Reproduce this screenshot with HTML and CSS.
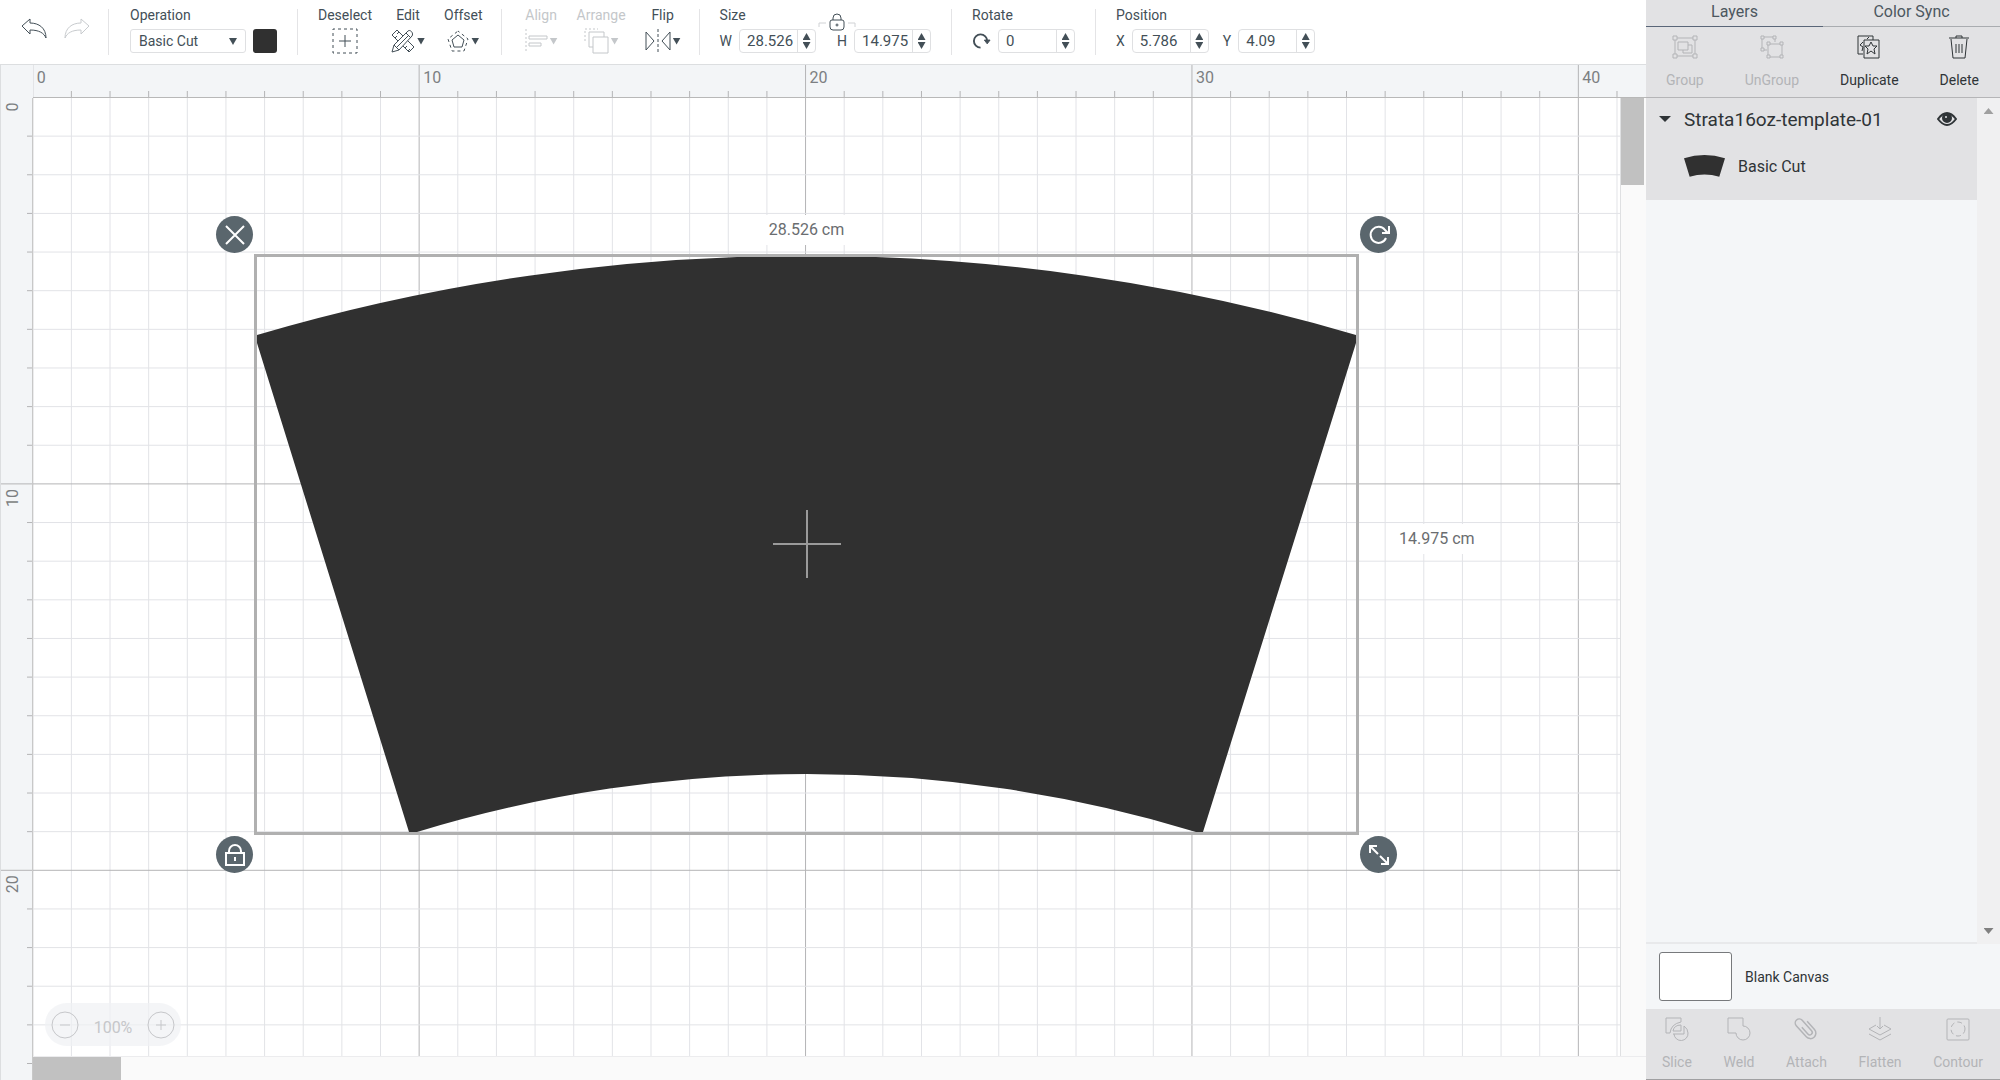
FILE: index.html
```
<!DOCTYPE html>
<html lang="en">
  <head>
    <meta charset="UTF-8" />
    <meta name="viewport" content="width=device-width, initial-scale=1.0" />
    <title>Canvas</title>
    <link rel="stylesheet" href="styles.css">
  </head>
  <body>
    <main class="editor">
      <div class="toolbar">
        <div class="group history">
          <button class="icon-btn" aria-label="Undo">
            <svg width="26" height="22" viewBox="0 0 26 22"><path d="M1 8 9 1v4c9 0 16 5 16 15-2-5-7-8-16-8v4L1 8z" /></svg>
          </button>
          <button class="icon-btn" aria-label="Redo" disabled>
            <svg width="26" height="22" viewBox="0 0 26 22"><path d="M25 8 17 1v4C8 5 1 10 1 20c2-5 7-8 16-8v4l8-8z" /></svg>
          </button>
        </div>

        <div class="group operation">
          <label class="title" for="operation">Operation</label>
          <div class="row">
            <div class="select">
              <select id="operation">
                <option>Basic Cut</option>
              </select>
              <span class="caret"></span>
            </div>
            <button class="swatch" aria-label="Material colour"></button>
          </div>
        </div>

        <div class="group tools">
          <button class="tool">
            <span class="title">Deselect</span>
            <span class="row">
              <svg width="26" height="26" viewBox="0 0 26 26"><rect x="1" y="1" width="24" height="24" stroke-dasharray="3 3" stroke-dashoffset="1" /><path d="M7 13h12M13 7v12" /></svg>
            </span>
          </button>
          <button class="tool">
            <span class="title">Edit</span>
            <span class="row">
              <svg width="24" height="24" viewBox="0 0 24 24"><path d="m1 6 5-5 17 17-5 5zM4 9l2-2M7 12l2-2M14 19l2-2M17 22l2-2M8 3 6 5" /><path class="paper" d="M1 23 3 16 17 2c2-2 6 2 4 5L8 21zM3 16l5 5M15 4l5 5M6 18 18 6" /></svg>
              <span class="caret"></span>
            </span>
          </button>
          <button class="tool">
            <span class="title">Offset</span>
            <span class="row">
              <svg width="22" height="22" viewBox="0 0 22 22"><path d="m11 5 6 5-2 7H7l-2-7z" /><path d="m11 1 10 8-4 12H5L1 9z" stroke-dasharray="3 3" stroke-dashoffset="1" /></svg>
              <span class="caret"></span>
            </span>
          </button>
        </div>

        <div class="group tools arrange">
          <button class="tool" disabled>
            <span class="title">Align</span>
            <span class="row">
              <svg width="23" height="26" viewBox="0 0 23 26"><path d="M1 1v24" stroke-dasharray="2 2" /><path d="M4 8h18v3H4zM4 15h12v3H4z" /></svg>
              <span class="caret"></span>
            </span>
          </button>
          <button class="tool" disabled>
            <span class="title">Arrange</span>
            <span class="row">
              <svg width="25" height="26" viewBox="0 0 25 26"><path d="M1 13V1h13" stroke-dasharray="2 2" /><path d="M9 19H5V4h15v5M9 9h15v16H9z" /></svg>
              <span class="caret"></span>
            </span>
          </button>
          <button class="tool">
            <span class="title">Flip</span>
            <span class="row">
              <svg width="26" height="26" viewBox="0 0 26 26"><path d="M1 4v18l8-9zM25 4v18l-8-9z" /><path d="M13 1v24" stroke-dasharray="3 2" /></svg>
              <span class="caret"></span>
            </span>
          </button>
        </div>

        <div class="group size">
          <div class="size-head">
            <span class="title">Size</span>
            <button class="icon-btn lock" aria-label="Lock proportions">
              <svg width="38" height="18" viewBox="0 0 38 18"><path class="faint" d="M1 14v-4h7M30 10h7v4" /><path d="M14 7h10q2 0 2 2v5q0 3-3 3h-8q-3 0-3-3V9q0-2 2-2zM15 7V5a4 4 0 0 1 8 0v2" /><circle cx="19" cy="12" r="1" /></svg>
            </button>
          </div>
          <div class="row fields">
            <label for="width">W</label>
            <div class="spinner">
              <input id="width" type="text" value="28.526">
              <span class="steps"><button aria-label="Increase width"></button><button aria-label="Decrease width"></button></span>
            </div>
            <label class="next" for="height">H</label>
            <div class="spinner">
              <input id="height" type="text" value="14.975">
              <span class="steps"><button aria-label="Increase height"></button><button aria-label="Decrease height"></button></span>
            </div>
          </div>
        </div>

        <div class="group">
          <span class="title">Rotate</span>
          <div class="row fields">
            <label for="rotate" aria-label="Angle">
              <svg width="19" height="20" viewBox="1 0 20 20"><path stroke-width="2" d="M10 17a7 7 0 1 1 7-7" /><path class="solid" d="M14 9h6l-3 4z" /></svg>
            </label>
            <div class="spinner">
              <input id="rotate" type="text" value="0">
              <span class="steps"><button aria-label="Increase angle"></button><button aria-label="Decrease angle"></button></span>
            </div>
          </div>
        </div>

        <div class="group">
          <span class="title">Position</span>
          <div class="row fields">
            <label for="pos-x">X</label>
            <div class="spinner">
              <input id="pos-x" type="text" value="5.786">
              <span class="steps"><button aria-label="Increase X"></button><button aria-label="Decrease X"></button></span>
            </div>
            <label class="next" for="pos-y">Y</label>
            <div class="spinner">
              <input id="pos-y" type="text" value="4.09">
              <span class="steps"><button aria-label="Increase Y"></button><button aria-label="Decrease Y"></button></span>
            </div>
          </div>
        </div>
      </div>

      <div class="workspace">
        <div class="corner"></div>
        <svg class="ruler-x"></svg>
        <svg class="ruler-y"></svg>

        <div class="canvas">
          <svg class="grid"></svg>

          <div class="selection">
            <svg class="shape" viewBox="0 0 1099 575">
              <path d="M0 78A1945 1945 0 0 1 1099 78V86L946 575H939A1338 1338 0 0 0 160 575H152L0 86z" />
              <path class="cross" d="M516 287h68M550 253v68" />
            </svg>
            <span class="measure measure-w">28.526 cm</span>
            <span class="measure measure-h">14.975 cm</span>
            <button class="handle top left" aria-label="Delete shape">
              <svg width="22" height="22" viewBox="0 0 22 22"><path d="m2 2 18 18M20 2 2 20" /></svg>
            </button>
            <button class="handle top right" aria-label="Rotate shape">
              <svg width="22" height="22" viewBox="0 0 22 22"><path d="M18 14a8 8 0 1 1-1-8l3 3M21 2v7h-7" /></svg>
            </button>
            <button class="handle bottom left" aria-label="Lock shape">
              <svg width="22" height="22" viewBox="0 0 22 22"><path d="M2 9h18v12H2zM5 9V7a6 6 0 0 1 12 0v2M11 13v4" /></svg>
            </button>
            <button class="handle bottom right" aria-label="Resize shape">
              <svg width="22" height="22" viewBox="0 0 22 22"><path d="m2 2 8 8M2 9V2h7M12 12l8 8M20 13v7h-7" /></svg>
            </button>
          </div>

          <div class="zoom">
            <button aria-label="Zoom out"><svg width="28" height="28" viewBox="0 0 28 28"><circle cx="14" cy="14" r="13" /><path d="M9 14h10" /></svg></button>
            <span>100%</span>
            <button aria-label="Zoom in"><svg width="28" height="28" viewBox="0 0 28 28"><circle cx="14" cy="14" r="13" /><path d="M9 14h10M14 9v10" /></svg></button>
          </div>
        </div>

        <div class="scroll-y"><div class="thumb"></div></div>
        <div class="scroll-x"><div class="thumb"></div></div>
      </div>
    </main>

    <aside class="panel">
      <div class="tabs">
        <button class="active">Layers</button>
        <button>Color Sync</button>
      </div>

      <div class="actions">
        <button disabled>
          <svg width="26" height="24" viewBox="0 0 26 24"><path d="M5 3h16M5 21h16M3 5v14M23 5v14M1 1h4v4H1zM21 1h4v4h-4zM1 19h4v4H1zM21 19h4v4h-4zM6 7h10v8H6zM16 10h4v8h-9v-3" /></svg>
          Group
        </button>
        <button disabled>
          <svg width="24" height="24" viewBox="0 0 24 24"><path d="M4 2h9M2 4v9M15 4v3M4 15h3M1 1h3v3H1zM13 1h3v3h-3zM1 13h3v3H1zM10 9h10M10 22h10M8 10v10M22 10v10M7 7h3v3H7zM20 7h3v3h-3zM7 20h3v3H7zM20 20h3v3h-3z" /></svg>
          UnGroup
        </button>
        <button>
          <svg width="24" height="24" viewBox="0 0 24 24"><path d="M6 19H1V1h15v4M7 5h15v18H7zM3 10l3-3M3 10l3 2-1 4M10 4l2-2" /><path d="m14 7 2 4h4l-3 3 1 5-4-3-4 3 1-5-3-3h4z" /></svg>
          Duplicate
        </button>
        <button>
          <svg width="22" height="24" viewBox="0 0 22 24"><path d="M1 3h20M8 3V1h6v2M3 4l2 19h12l2-19M8 9v9M11 9v9M14 9v9" /></svg>
          Delete
        </button>
      </div>

      <div class="layers">
        <div class="layer-list">
          <div class="layer">
            <div class="layer-head">
              <button class="fold" aria-label="Collapse layer"></button>
              <span class="name">Strata16oz-template-01</span>
              <button class="icon-btn" aria-label="Hide layer">
                <svg class="eye" width="20" height="14" viewBox="0 0 20 14"><path d="M1 7q9-12 18 0-9 12-18 0z" /><circle class="solid" cx="10" cy="6" r="4" /><circle class="glint" cx="9" cy="5" r="1" /></svg>
              </button>
            </div>
            <div class="layer-item">
              <svg width="41" height="22" viewBox="0 0 1099 575"><path d="M0 78A1890 1890 0 0 1 1099 78L946 575A1338 1338 0 0 0 152 575z" /></svg>
              <span>Basic Cut</span>
            </div>
          </div>
        </div>
        <div class="layer-scroll">
          <button class="up" aria-label="Scroll up"></button>
          <button class="down" aria-label="Scroll down"></button>
        </div>
      </div>

      <div class="blank">
        <button class="blank-swatch" aria-label="Canvas colour"></button>
        <span>Blank Canvas</span>
      </div>

      <div class="actions combine">
        <button disabled>
          <svg width="24" height="24" viewBox="0 0 24 24"><path d="M1 16V1h15v4Q6 7 5 16zM8 14q1-6 8-6v6zM8 17h11V9q4 3 4 7a7 7 0 0 1-14 1" /></svg>
          Slice
        </button>
        <button disabled>
          <svg width="24" height="24" viewBox="0 0 24 24"><path d="M1 1h15v8a7 7 0 1 1-7 7H1z" /></svg>
          Weld
        </button>
        <button disabled>
          <svg width="24" height="24" viewBox="0 0 24 24"><path transform="rotate(-42 12 12)" stroke-width="1.5" d="M10 8v9a2 2 0 0 0 5 0V3a4 4 0 0 0-8 0v15a5 5 0 0 0 11 0V7" /></svg>
          Attach
        </button>
        <button disabled>
          <svg width="24" height="24" viewBox="0 0 24 24"><path d="M12 0v12M9 9l3 3 3-3M8 8l-7 4 11 6 11-6-7-4M1 17l11 6 11-6" /></svg>
          Flatten
        </button>
        <button disabled>
          <svg width="24" height="24" viewBox="0 0 24 24"><rect x="1" y="2" width="22" height="21" rx="1" /><circle cx="12" cy="12" r="7" stroke-dasharray="5 3" /></svg>
          Contour
        </button>
      </div>
    </aside>

    <script>
      const CM = 38.64; // pixels per centimetre at 100%

      function line(x1, y1, x2, y2, major) {
        return `<line x1="${x1}" y1="${y1}" x2="${x2}" y2="${y2}" class="${major ? 'major' : 'minor'}" />`;
      }

      function draw() {
        const grid = document.querySelector('.grid');
        const rulerX = document.querySelector('.ruler-x');
        const rulerY = document.querySelector('.ruler-y');
        const { width, height } = grid.getBoundingClientRect();
        const size = 33;
        let lines = '';
        let top = '';
        let side = '';

        for (let i = 0; i * CM < width; i++) {
          const x = i * CM - 0.25;
          const major = i % 10 === 0;
          lines += line(x, 0, x, height, major);
          top += line(x, major ? 0 : 26, x, size, true);
          if (major) top += `<text x="${x + 4}" y="18">${i}</text>`;
        }
        for (let i = 0; i * CM < height + 24; i++) {
          const y = i * CM - 0.5;
          const major = i % 10 === 0;
          lines += line(0, y, width, y, major);
          side += line(major ? 0 : 26, y, size, y, true);
          if (major) {
            const ty = y + (i ? 23 : 14);
            side += `<text transform="translate(17 ${ty}) rotate(-90)">${i}</text>`;
          }
        }

        grid.innerHTML = lines;
        rulerX.innerHTML = top;
        rulerY.innerHTML = side;
      }

      draw();
      window.addEventListener('resize', draw);
    </script>
  </body>
</html>
```
FILE: styles.css
```
* {
  margin: 0;
  padding: 0;
  box-sizing: border-box;
}
body {
  display: grid;
  grid-template-columns: 1fr 354px;
  height: 100vh;
  overflow: hidden;
  background: #fff;
  color: #434f57;
  font-family: Roboto, sans-serif;
  font-size: 14px;
}
button,
input,
select {
  font: inherit;
  color: inherit;
  background: none;
  border: none;
}
svg {
  display: block;
  fill: none;
  stroke: currentColor;
}
.solid {
  fill: currentColor;
}

/* toolbar */
.editor {
  display: flex;
  flex-direction: column;
  min-width: 0;
}
.toolbar {
  display: flex;
  height: 65px;
  padding: 9px 0;
  border-bottom: 1px solid #dcdee0;
}
.group {
  display: flex;
  flex-direction: column;
  height: 46px;
  padding: 0 20px;
  border-right: 1px solid #e4e4e6;
}
.group:last-child {
  border-right: none;
}
.title {
  display: block;
  height: 20px;
  line-height: 13px;
  white-space: nowrap;
}
.row {
  display: flex;
  align-items: center;
  height: 24px;
}
.history {
  flex-direction: row;
  align-items: center;
  gap: 17px;
  padding: 0 18px 6px 21px;
}
.history button:disabled {
  color: #c8cbce;
}
.operation {
  padding-left: 21px;
}
.operation .row {
  gap: 7px;
}
.select {
  position: relative;
}
.select select {
  appearance: none;
  width: 116px;
  height: 24px;
  padding-left: 8px;
  border: 1px solid #dfe0e2;
  border-radius: 3px;
}
.select .caret {
  position: absolute;
  top: 9px;
  right: 9px;
  pointer-events: none;
}
.caret {
  width: 8px;
  height: 7px;
  background: currentColor;
  clip-path: polygon(0 0, 100% 0, 50% 100%);
}
.swatch {
  width: 24px;
  height: 24px;
  border-radius: 3px;
  background: #303030;
}
.tools {
  flex-direction: row;
  gap: 19px;
  padding-right: 18px;
}
.arrange {
  padding-left: 23px;
}
.tool {
  display: flex;
  flex-direction: column;
  align-items: center;
}
.tool .row {
  gap: 2px;
}
.tool:disabled {
  color: #c4c7ca;
}
.paper {
  fill: #fff;
}
.size-head {
  display: flex;
  justify-content: space-between;
  height: 20px;
  padding-right: 75px;
}
.lock {
  padding-top: 4px;
}
.faint {
  stroke: #d0d2d5;
}
.fields {
  gap: 7px;
}
.fields .next {
  margin-left: 7px;
}
.size .next {
  margin-left: 14px;
}
.spinner {
  display: flex;
  width: 77px;
  height: 24px;
  border: 1px solid #dfe0e2;
  border-radius: 4px;
}
.spinner input {
  flex: 1;
  min-width: 0;
  padding-left: 7px;
  font-size: 15px;
  outline: none;
}
.steps {
  display: flex;
  flex-direction: column;
  justify-content: center;
  align-items: center;
  gap: 2px;
  width: 18px;
  border-left: 1px solid #dfe0e2;
}
.steps button {
  width: 8px;
  height: 7px;
  background: currentColor;
  clip-path: polygon(50% 0, 100% 100%, 0 100%);
}
.steps button:last-child {
  clip-path: polygon(0 0, 100% 0, 50% 100%);
}

/* rulers and canvas */
.workspace {
  flex: 1;
  display: grid;
  grid-template-columns: 33px 1fr 25px;
  grid-template-rows: 33px 1fr 24px;
  grid-template-areas:
    "corner top top"
    "side canvas scroll"
    "side bottom bottom";
  min-height: 0;
}
.corner,
.ruler-x,
.ruler-y {
  width: 100%;
  height: 100%;
  background: #f3f5f7;
}
.corner {
  grid-area: corner;
  border-left: 1px solid #dcdee0;
}
.ruler-x {
  grid-area: top;
  border-bottom: 1px solid #b8b8b8;
}
.ruler-y {
  grid-area: side;
  border-left: 1px solid #dcdee0;
  border-right: 1px solid #c8c8c8;
}
.workspace text {
  fill: #7c7f82;
  stroke: none;
  font-size: 16px;
}
.major {
  stroke: #b4b4b6;
}
.minor {
  stroke: #e2e3e7;
}
.canvas {
  grid-area: canvas;
  position: relative;
  overflow: hidden;
  border-right: 1px solid #dfe0e2;
}
.grid {
  width: 100%;
  height: 100%;
}
.selection {
  position: absolute;
  left: 221px;
  top: 156px;
  width: 1105px;
  height: 581px;
  border: 3px solid #b0b0b0;
}
.shape {
  width: 100%;
  height: 100%;
  fill: #303030;
  stroke: none;
}
.cross {
  stroke: #9a9a9a;
  stroke-width: 2;
}
.measure {
  position: absolute;
  padding: 5px;
  background: #fff;
  color: #6a6d70;
  font-size: 16px;
  line-height: 20px;
  white-space: nowrap;
}
.measure-w {
  left: 50%;
  bottom: calc(100% + 12px);
  transform: translateX(-50%);
}
.measure-h {
  left: calc(100% + 38px);
  top: calc(50% - 21px);
}
.handle {
  position: absolute;
  display: grid;
  place-items: center;
  width: 37px;
  height: 37px;
  border-radius: 50%;
  background: #5a666d;
  color: #fff;
}
.handle svg {
  stroke-width: 2;
}
.handle.left {
  left: -41px;
}
.handle.right {
  right: -41px;
}
.handle.top {
  top: -41px;
}
.handle.bottom {
  bottom: -41px;
}
.zoom {
  position: absolute;
  left: 12px;
  bottom: 10px;
  display: flex;
  align-items: center;
  justify-content: space-between;
  width: 136px;
  height: 43px;
  padding: 0 6px;
  border-radius: 22px;
  background: rgba(240, 241, 243, 0.7);
  color: #c6c7ca;
  font-size: 16px;
}
.zoom span {
  padding-top: 6px;
}
.scroll-y {
  grid-area: scroll;
  background: #fafafa;
}
.scroll-y .thumb {
  width: 23px;
  height: 87px;
  background: #c1c1c1;
}
.scroll-x {
  grid-area: bottom;
  background: #fafafa;
  border-top: 1px solid #ececee;
}
.scroll-x .thumb {
  width: 88px;
  height: 100%;
  background: #c1c1c1;
}

/* right panel */
.panel {
  display: flex;
  flex-direction: column;
  min-height: 0;
  background: #f4f6f8;
  color: #2f3437;
}
.tabs {
  display: flex;
  height: 27px;
  background: #e2e2e4;
  color: #4c575f;
  font-size: 16px;
}
.tabs button {
  flex: 1;
  padding-bottom: 4px;
  border-bottom: 1px solid #a9acb0;
}
.tabs .active {
  border-bottom-color: #5a6678;
}
.actions {
  display: flex;
  justify-content: space-between;
  height: 71px;
  padding: 8px 21px 0 20px;
  background: #e2e2e4;
  border-bottom: 1px solid #b5b5b7;
}
.actions button {
  display: flex;
  flex-direction: column;
  align-items: center;
  gap: 13px;
  line-height: 16px;
}
.actions button:disabled {
  color: #b3b4b7;
}
.layers {
  flex: 1;
  display: flex;
  min-height: 0;
}
.layer-list {
  flex: 1;
  border-bottom: 2px solid #e8e9eb;
}
.layer {
  height: 102px;
  padding: 8px 20px 0 13px;
  background: #e2e2e4;
}
.layer-head {
  display: flex;
  align-items: center;
  height: 26px;
}
.fold {
  width: 12px;
  height: 6px;
  background: currentColor;
  clip-path: polygon(0 0, 100% 0, 50% 100%);
}
.name {
  flex: 1;
  padding-left: 13px;
  font-size: 19px;
}
.eye {
  stroke-width: 2;
}
.glint {
  fill: #e2e2e4;
  stroke: none;
}
.layer-item {
  display: flex;
  align-items: center;
  gap: 13px;
  height: 70px;
  padding: 0 0 2px 25px;
  font-size: 16px;
}
.layer-item svg {
  fill: #303030;
  stroke: none;
}
.layer-scroll {
  display: flex;
  flex-direction: column;
  justify-content: space-between;
  align-items: center;
  width: 23px;
  padding: 10px 0;
  background: #f0f0f1;
}
.layer-scroll button {
  width: 10px;
  height: 6px;
  background: #a0a0a0;
  clip-path: polygon(50% 0, 100% 100%, 0 100%);
}
.layer-scroll .down {
  background: #808080;
  clip-path: polygon(0 0, 100% 0, 50% 100%);
}
.blank {
  display: flex;
  align-items: center;
  gap: 13px;
  height: 65px;
  padding-left: 13px;
}
.blank-swatch {
  width: 73px;
  height: 49px;
  border: 1px solid #77797c;
  border-radius: 3px;
  background: #fff;
}
.combine {
  padding: 8px 17px 0 16px;
  border-bottom-color: #a0a0a2;
}
```
